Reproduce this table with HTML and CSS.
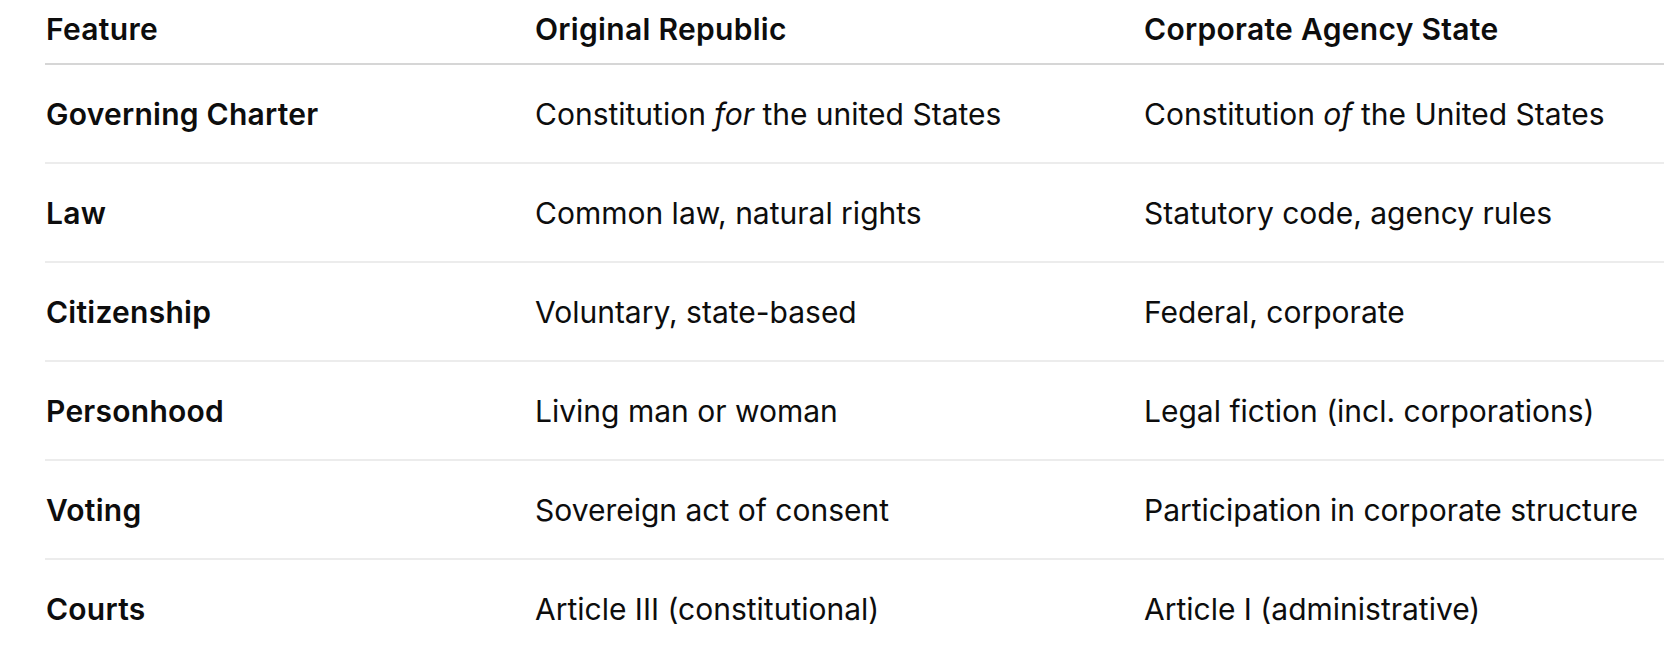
FILE: index.html
```html
<!DOCTYPE html>
<html lang="en">
<head>
<meta charset="utf-8">
<title>Comparison</title>
<link rel="stylesheet" href="styles.css">
</head>
<body>
<div class="wrap">
<table class="cmp">
  <colgroup>
    <col class="c1"><col class="c2"><col class="c3">
  </colgroup>
  <thead>
    <tr><th>Feature</th><th>Original Republic</th><th>Corporate Agency State</th></tr>
  </thead>
  <tbody>
    <tr><td class="key">Governing Charter</td><td>Constitution <em>for</em> the united States</td><td>Constitution <em>of</em> the United States</td></tr>
    <tr><td class="key">Law</td><td>Common law, natural rights</td><td>Statutory code, agency rules</td></tr>
    <tr><td class="key">Citizenship</td><td>Voluntary, state-based</td><td>Federal, corporate</td></tr>
    <tr><td class="key">Personhood</td><td>Living man or woman</td><td>Legal fiction (incl. corporations)</td></tr>
    <tr><td class="key">Voting</td><td>Sovereign act of consent</td><td>Participation in corporate structure</td></tr>
    <tr><td class="key">Courts</td><td>Article III (constitutional)</td><td>Article I (administrative)</td></tr>
  </tbody>
</table>
</div>
</body>
</html>
```

FILE: styles.css
```css
html, body {
  margin: 0;
  padding: 0;
  background: #ffffff;
  overflow: hidden;
}
body {
  font-family: Inter, "Noto Sans", "Liberation Sans", sans-serif;
  color: #0d0d0d;
  font-size: 30px;
  line-height: 40px;
}
.wrap {
  padding-left: 45px;
}
.cmp {
  border-collapse: collapse;
  table-layout: fixed;
  width: 1619px;
}
.c1 { width: 490px; }
.c2 { width: 609px; }
.c3 { width: 520px; }
.cmp th, .cmp td {
  text-align: left;
  padding: 0;
  vertical-align: middle;
  white-space: nowrap;
}
.cmp th {
  font-weight: 600;
  letter-spacing: 0.3px;
  padding-top: 9px;
  padding-bottom: 14px;
  border-bottom: 2px solid #d6d6d6;
}
.cmp td {
  font-weight: 400;
  padding-top: 29px;
  padding-bottom: 28px;
  border-bottom: 2px solid #ececec;
}
.cmp tbody tr:last-child td {
  border-bottom: none;
}
.cmp td.key {
  font-weight: 600;
  letter-spacing: 0.25px;
}
.cmp th:first-child, .cmp td:first-child {
  padding-left: 1px;
}
```
